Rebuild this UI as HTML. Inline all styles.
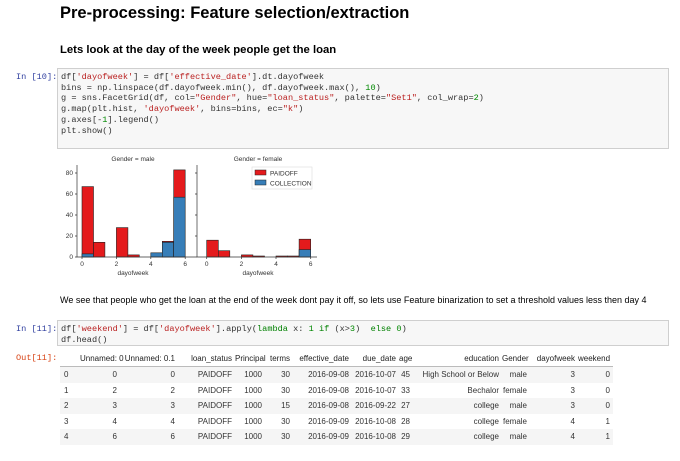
<!DOCTYPE html>
<html><head><meta charset="utf-8"><style>
body{margin:0;width:680px;height:461px;background:#fff;font-family:"Liberation Sans",sans-serif;position:relative;overflow:hidden}
.a{position:absolute;white-space:pre}
.code{position:absolute;left:57px;width:612px;background:#f7f7f7;border:1px solid #cfcfcf;font-family:"Liberation Mono",monospace;font-size:8.6px;line-height:10.7px;color:#333;box-sizing:border-box;padding:3px 0 0 3px;white-space:pre}
.s{color:#ba2121}.k{color:#008000}.n{color:#080}
.pr{position:absolute;font-family:"Liberation Mono",monospace;font-size:8.6px;color:#303f9f}
table{position:absolute;left:60px;top:351px;border-collapse:collapse;table-layout:fixed;font-size:8px;color:#333;width:553px}
td,th{padding:0 3px 0 0;text-align:right;height:15.5px;white-space:nowrap;overflow:visible}
th{font-weight:normal;height:15px;color:#222}
tbody tr:nth-child(odd){background:#f5f5f5}
td:first-child{text-align:left;padding-left:4px}
</style></head><body>
<div class="a" style="left:60px;top:4px;font-size:16.5px;font-weight:bold;color:#000">Pre-processing: Feature selection/extraction</div>
<div class="a" style="left:60px;top:44px;font-size:11.3px;font-weight:bold;color:#000">Lets look at the day of the week people get the loan</div>
<div class="pr" style="left:16px;top:72px">In [10]:</div>
<div class="code" style="top:68px;height:81px">df[<span class="s">'dayofweek'</span>] = df[<span class="s">'effective_date'</span>].dt.dayofweek
bins = np.linspace(df.dayofweek.min(), df.dayofweek.max(), <span class="n">10</span>)
g = sns.FacetGrid(df, col=<span class="s">"Gender"</span>, hue=<span class="s">"loan_status"</span>, palette=<span class="s">"Set1"</span>, col_wrap=<span class="n">2</span>)
g.map(plt.hist, <span class="s">'dayofweek'</span>, bins=bins, ec=<span class="s">"k"</span>)
g.axes[-<span class="n">1</span>].legend()
plt.show()</div>
<svg style="position:absolute;left:0;top:0" width="680" height="461" font-family="Liberation Sans" font-size="6.5" fill="#333">
<text x="133" y="161" text-anchor="middle">Gender = male</text>
<text x="258" y="161" text-anchor="middle">Gender = female</text>
<g stroke="#222" stroke-width="0.6">
<rect x="82" y="186.6" width="11.5" height="70.4" fill="#e41a1c"/><rect x="82" y="253.9" width="11.5" height="3.1" fill="#377eb8"/>
<rect x="93.5" y="242.3" width="11.4" height="14.7" fill="#e41a1c"/>
<rect x="116.4" y="227.6" width="11.5" height="29.4" fill="#e41a1c"/>
<rect x="127.9" y="254.9" width="11.4" height="2.1" fill="#e41a1c"/>
<rect x="150.8" y="252.8" width="11.5" height="4.2" fill="#377eb8"/>
<rect x="162.3" y="241.3" width="11.4" height="15.7" fill="#e41a1c"/><rect x="162.3" y="242.3" width="11.4" height="14.7" fill="#377eb8"/>
<rect x="173.7" y="169.9" width="11.5" height="87.1" fill="#e41a1c"/><rect x="173.7" y="197.2" width="11.5" height="59.8" fill="#377eb8"/>
<rect x="206.7" y="240.2" width="11.6" height="16.8" fill="#e41a1c"/>
<rect x="218.3" y="250.7" width="11.5" height="6.3" fill="#e41a1c"/>
<rect x="241.4" y="254.9" width="11.5" height="2.1" fill="#e41a1c"/>
<rect x="252.9" y="256" width="11.6" height="1" fill="#e41a1c"/>
<rect x="276" y="256" width="11.6" height="1" fill="#e41a1c"/>
<rect x="287.6" y="256" width="11.5" height="1" fill="#e41a1c"/>
<rect x="299.1" y="239.2" width="11.6" height="17.8" fill="#e41a1c"/><rect x="299.1" y="249.6" width="11.6" height="7.4" fill="#377eb8"/>
</g>
<g stroke="#333" stroke-width="0.7" fill="none">
<path d="M77 165V257H195M197 165V257H317"/>
<path d="M75 257h2M75 236h2M75 215h2M75 194h2M75 173h2M82 257v2M116.4 257v2M150.8 257v2M185.2 257v2M195 257h2M195 236h2M195 215h2M195 194h2M195 173h2M206.7 257v2M241.4 257v2M276 257v2M310.7 257v2"/>
</g>
<g text-anchor="end"><text x="73" y="259">0</text><text x="73" y="238">20</text><text x="73" y="217">40</text><text x="73" y="196">60</text><text x="73" y="175">80</text></g>
<g text-anchor="middle"><text x="82" y="266">0</text><text x="116.4" y="266">2</text><text x="150.8" y="266">4</text><text x="185.2" y="266">6</text>
<text x="206.7" y="266">0</text><text x="241.4" y="266">2</text><text x="276" y="266">4</text><text x="310.7" y="266">6</text>
<text x="133" y="275">dayofweek</text><text x="258" y="275">dayofweek</text></g>
<rect x="252" y="167" width="60" height="22" fill="#fff" stroke="#ddd" stroke-width="0.6"/>
<rect x="255" y="170" width="11" height="5" fill="#e41a1c" stroke="#222" stroke-width="0.5"/>
<rect x="255" y="180" width="11" height="5" fill="#377eb8" stroke="#222" stroke-width="0.5"/>
<text x="270" y="175.5">PAIDOFF</text><text x="270" y="185.5">COLLECTION</text>
</svg>
<div class="a" style="left:60px;top:295px;font-size:9px;color:#000">We see that people who get the loan at the end of the week dont pay it off, so lets use Feature binarization to set a threshold values less then day 4</div>
<div class="pr" style="left:16px;top:324px">In [11]:</div>
<div class="code" style="top:320px;height:26px">df[<span class="s">'weekend'</span>] = df[<span class="s">'dayofweek'</span>].apply(<span class="k">lambda</span> x: <span class="n">1</span> <span class="k">if</span> (x&gt;<span class="n">3</span>)  <span class="k">else</span> <span class="n">0</span>)
df.head()</div>
<div class="pr" style="left:16px;top:353px;color:#d84315">Out[11]:</div>
<table>
<colgroup><col style="width:20px"><col style="width:40px"><col style="width:58px"><col style="width:57px"><col style="width:30px"><col style="width:28px"><col style="width:59px"><col style="width:47px"><col style="width:14px"><col style="width:89px"><col style="width:28px"><col style="width:48px"><col style="width:35px"></colgroup>
<thead><tr style="border-bottom:1px solid #bbb"><th></th><th>Unnamed: 0</th><th>Unnamed: 0.1</th><th>loan_status</th><th>Principal</th><th>terms</th><th>effective_date</th><th>due_date</th><th style="text-align:left">age</th><th>education</th><th>Gender</th><th>dayofweek</th><th>weekend</th></tr></thead>
<tbody>
<tr><td>0</td><td>0</td><td>0</td><td>PAIDOFF</td><td>1000</td><td>30</td><td>2016-09-08</td><td>2016-10-07</td><td>45</td><td>High School or Below</td><td>male</td><td>3</td><td>0</td></tr>
<tr><td>1</td><td>2</td><td>2</td><td>PAIDOFF</td><td>1000</td><td>30</td><td>2016-09-08</td><td>2016-10-07</td><td>33</td><td>Bechalor</td><td>female</td><td>3</td><td>0</td></tr>
<tr><td>2</td><td>3</td><td>3</td><td>PAIDOFF</td><td>1000</td><td>15</td><td>2016-09-08</td><td>2016-09-22</td><td>27</td><td>college</td><td>male</td><td>3</td><td>0</td></tr>
<tr><td>3</td><td>4</td><td>4</td><td>PAIDOFF</td><td>1000</td><td>30</td><td>2016-09-09</td><td>2016-10-08</td><td>28</td><td>college</td><td>female</td><td>4</td><td>1</td></tr>
<tr><td>4</td><td>6</td><td>6</td><td>PAIDOFF</td><td>1000</td><td>30</td><td>2016-09-09</td><td>2016-10-08</td><td>29</td><td>college</td><td>male</td><td>4</td><td>1</td></tr>
</tbody></table>
</body></html>
